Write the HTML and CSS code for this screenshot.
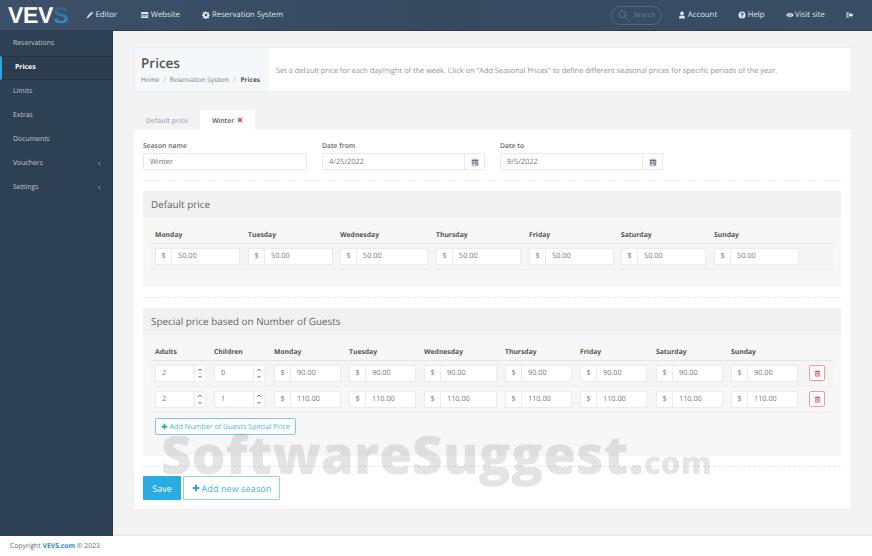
FILE: index.html
```html
<!DOCTYPE html>
<html lang="en">
<head>
<meta charset="utf-8">
<title>Prices</title>
<link rel="stylesheet" href="styles.css">
</head>
<body>
<svg class="defs" width="0" height="0" aria-hidden="true">
  <symbol id="i-pencil" viewBox="0 0 16 16"><path d="M11.5 1.5l3 3-1.6 1.6-3-3zM8.9 3.1l3 3-7.4 7.4L1 15l1.5-3.5z" fill="currentColor"/></symbol>
  <symbol id="i-table" viewBox="0 0 16 16"><path d="M1 2h14v12H1zM2.2 6v2h3.4V6zm4.6 0v2h3.4V6zm4.6 0v2h2.4V6zM2.2 9.2v2h3.4v-2zm4.6 0v2h3.4v-2zm4.6 0v2h2.4v-2z" fill="currentColor" fill-rule="evenodd"/></symbol>
  <symbol id="i-cog" viewBox="0 0 16 16"><path d="M6.8 1h2.4l.4 2 1.3.6 1.7-1.1 1.7 1.7-1.1 1.7.6 1.3 2 .4v2.4l-2 .4-.6 1.3 1.1 1.7-1.7 1.7-1.7-1.1-1.3.6-.4 2H6.8l-.4-2-1.3-.6-1.7 1.1-1.7-1.7 1.1-1.7-.6-1.3-2-.4V6.8l2-.4.6-1.3-1.1-1.7 1.7-1.7 1.7 1.1 1.3-.6zM8 5.5a2.5 2.5 0 100 5 2.5 2.5 0 000-5z" fill="currentColor" fill-rule="evenodd"/></symbol>
  <symbol id="i-user" viewBox="0 0 16 16"><path d="M8 1a3.5 3.5 0 110 7.4A3.5 3.5 0 018 1zM2 15c0-4 1.500-6 3.500-6 .8.600 1.600.900 2.500.900s1.700-.300 2.500-.900c2 0 3.500 2 3.500 6z" fill="currentColor"/></symbol>
  <symbol id="i-help" viewBox="0 0 16 16"><path d="M8 1a7 7 0 110 14A7 7 0 018 1zM7 11v2h2v-2zM8 3.500c-1.700 0-2.900.900-3.100 2.500l1.900.300c.1-.8.500-1.100 1.200-1.100.6 0 1 .300 1 .800s-.300.800-.900 1.200C7.300 7.300 7 8 7 9v.8h2V9.300c0-.4.200-.600.800-1 .8-.600 1.300-1.200 1.300-2.200 0-1.600-1.300-2.600-3.100-2.600z" fill="currentColor" fill-rule="evenodd"/></symbol>
  <symbol id="i-eye" viewBox="0 0 16 16"><path d="M8 3.500c3.200 0 5.800 1.900 7.500 4.500-1.700 2.600-4.300 4.500-7.500 4.500S2.200 10.600.5 8C2.200 5.400 4.800 3.500 8 3.500zM8 5a3 3 0 100 6 3 3 0 000-6zm0 1.200a1.800 1.800 0 110 3.600 1.800 1.800 0 010-3.600z" fill="currentColor" fill-rule="evenodd"/></symbol>
  <symbol id="i-out" viewBox="0 0 16 16"><path d="M1 3h5v2H3v6h3v2H1zM9 3.500L15 8l-6 4.500V10H5.500V6H9z" fill="currentColor"/></symbol>
  <symbol id="i-cal" viewBox="0 0 16 16"><path d="M4 1h1.500v2H4zm6.500 0H12v2h-1.500zM1.500 2.500H3V4h3.500V2.500h3V4H13V2.500h1.500V15h-13zM3 6.500v1.800h2V6.500zm3 0v1.800h2V6.500zm3 0v1.800h2V6.500zm3 0v1.800h1V6.500zM3 9.300v1.800h2V9.300zm3 0v1.800h2V9.300zm3 0v1.800h2V9.300zm3 0v1.800h1V9.300zM3 12v1.800h2V12zm3 0v1.800h2V12zm3 0v1.800h2V12z" fill="currentColor" fill-rule="evenodd"/></symbol>
  <symbol id="i-plus" viewBox="0 0 16 16"><path d="M6 1.500h4V6h4.500v4H10v4.500H6V10H1.500V6H6z" fill="currentColor"/></symbol>
  <symbol id="i-x" viewBox="0 0 16 16"><path d="M4.500 1.500L8 5l3.500-3.500 3 3L11 8l3.500 3.500-3 3L8 11l-3.500 3.500-3-3L5 8 1.500 4.500z" fill="currentColor"/></symbol>
  <symbol id="i-trash" viewBox="0 0 16 16"><path d="M6 1h4l.5 1.500H14V5H2V2.500h3.500zM3 6h10v9H3zm2.200 1.500v6h1.200v-6zm2.200 0v6h1.200v-6zm2.200 0v6h1.200v-6z" fill="currentColor" fill-rule="evenodd"/></symbol>
  <symbol id="i-search" viewBox="0 0 16 16"><circle cx="7" cy="7" r="5.500" fill="none" stroke="currentColor" stroke-width="1"/><path d="M11 11l4 4" stroke="currentColor" stroke-width="1"/></symbol>
  <symbol id="i-left" viewBox="0 0 16 16"><path d="M10.500 2.500L5 8l5.500 5.500" fill="none" stroke="currentColor" stroke-width="2.500"/></symbol>
  <symbol id="i-up" viewBox="0 0 16 16"><path d="M2.500 11L8 5.500l5.500 5.500" fill="none" stroke="currentColor" stroke-width="3"/></symbol>
  <symbol id="i-down" viewBox="0 0 16 16"><path d="M2.500 5L8 10.500 13.500 5" fill="none" stroke="currentColor" stroke-width="3"/></symbol>
</svg>

<header class="topbar">
  <div class="logo">VEV<span class="logo-s">S</span></div>
  <nav class="top-left">
    <a class="top-link"><svg class="ico"><use href="#i-pencil"/></svg>Editor</a>
    <a class="top-link"><svg class="ico ico-wide"><use href="#i-table"/></svg>Website</a>
    <a class="top-link"><svg class="ico"><use href="#i-cog"/></svg>Reservation System</a>
  </nav>
  <nav class="top-right">
    <div class="search"><svg class="search-ico"><use href="#i-search"/></svg><span>Search</span></div>
    <a class="top-link"><svg class="ico"><use href="#i-user"/></svg>Account</a>
    <a class="top-link"><svg class="ico"><use href="#i-help"/></svg>Help</a>
    <a class="top-link"><svg class="ico"><use href="#i-eye"/></svg>Visit site</a>
    <a class="top-link"><svg class="ico"><use href="#i-out"/></svg></a>
  </nav>
</header>

<div class="middle">
  <aside class="sidebar">
    <a class="side-item">Reservations</a>
    <a class="side-item active">Prices</a>
    <a class="side-item">Limits</a>
    <a class="side-item">Extras</a>
    <a class="side-item">Documents</a>
    <a class="side-item">Vouchers<svg class="chev"><use href="#i-left"/></svg></a>
    <a class="side-item">Settings<svg class="chev"><use href="#i-left"/></svg></a>
  </aside>

  <main class="main">
    <section class="page-head">
      <div class="title-box">
        <h1>Prices</h1>
        <div class="crumbs"><span>Home</span><i>/</i><span>Reservation System</span><i>/</i><b>Prices</b></div>
      </div>
      <p class="page-desc">Set a default price for each day/night of the week. Click on "Add Seasonal Prices" to define different seasonal prices for specific periods of the year.</p>
    </section>

    <div class="tabs">
      <a class="tab">Default price</a>
      <a class="tab current">Winter <svg class="tab-x"><use href="#i-x"/></svg></a>
    </div>

    <section class="card">
      <div class="form-row">
        <div class="field f-season">
          <label>Season name</label>
          <div class="box"><span class="val">Winter</span></div>
        </div>
        <div class="field f-date">
          <label>Date from</label>
          <div class="box"><span class="val">4/25/2022</span><span class="cal"><svg class="cal-ico"><use href="#i-cal"/></svg></span></div>
        </div>
        <div class="field f-date">
          <label>Date to</label>
          <div class="box"><span class="val">9/5/2022</span><span class="cal"><svg class="cal-ico"><use href="#i-cal"/></svg></span></div>
        </div>
      </div>

      <hr class="dash dash-first">

      <section class="panel panel-default">
        <h2>Default price</h2>
        <div class="panel-body">
          <div class="grid week th-row">
            <span>Monday</span><span>Tuesday</span><span>Wednesday</span><span>Thursday</span><span>Friday</span><span>Saturday</span><span>Sunday</span>
          </div>
          <div class="grid week tr shaded">
            <div class="money"><span class="cur">$</span><span class="amt">50.00</span></div>
            <div class="money"><span class="cur">$</span><span class="amt">50.00</span></div>
            <div class="money"><span class="cur">$</span><span class="amt">50.00</span></div>
            <div class="money"><span class="cur">$</span><span class="amt">50.00</span></div>
            <div class="money"><span class="cur">$</span><span class="amt">50.00</span></div>
            <div class="money"><span class="cur">$</span><span class="amt">50.00</span></div>
            <div class="money"><span class="cur">$</span><span class="amt">50.00</span></div>
          </div>
        </div>
      </section>

      <hr class="dash">

      <section class="panel panel-special">
        <h2>Special price based on Number of Guests</h2>
        <div class="panel-body">
          <div class="grid guests th-row">
            <span>Adults</span><span>Children</span><span>Monday</span><span>Tuesday</span><span>Wednesday</span><span>Thursday</span><span>Friday</span><span>Saturday</span><span>Sunday</span>
          </div>
          <div class="grid guests tr shaded">
            <div class="spin"><span class="num">2</span><span class="arrows"><svg><use href="#i-up"/></svg><svg><use href="#i-down"/></svg></span></div>
            <div class="spin"><span class="num">0</span><span class="arrows"><svg><use href="#i-up"/></svg><svg><use href="#i-down"/></svg></span></div>
            <div class="money"><span class="cur">$</span><span class="amt">90.00</span></div>
            <div class="money"><span class="cur">$</span><span class="amt">90.00</span></div>
            <div class="money"><span class="cur">$</span><span class="amt">90.00</span></div>
            <div class="money"><span class="cur">$</span><span class="amt">90.00</span></div>
            <div class="money"><span class="cur">$</span><span class="amt">90.00</span></div>
            <div class="money"><span class="cur">$</span><span class="amt">90.00</span></div>
            <div class="money"><span class="cur">$</span><span class="amt">90.00</span></div>
            <a class="del"><svg><use href="#i-trash"/></svg></a>
          </div>
          <div class="grid guests tr">
            <div class="spin"><span class="num">2</span><span class="arrows"><svg><use href="#i-up"/></svg><svg><use href="#i-down"/></svg></span></div>
            <div class="spin"><span class="num">1</span><span class="arrows"><svg><use href="#i-up"/></svg><svg><use href="#i-down"/></svg></span></div>
            <div class="money"><span class="cur">$</span><span class="amt">110.00</span></div>
            <div class="money"><span class="cur">$</span><span class="amt">110.00</span></div>
            <div class="money"><span class="cur">$</span><span class="amt">110.00</span></div>
            <div class="money"><span class="cur">$</span><span class="amt">110.00</span></div>
            <div class="money"><span class="cur">$</span><span class="amt">110.00</span></div>
            <div class="money"><span class="cur">$</span><span class="amt">110.00</span></div>
            <div class="money"><span class="cur">$</span><span class="amt">110.00</span></div>
            <a class="del"><svg><use href="#i-trash"/></svg></a>
          </div>
          <a class="add-guests"><svg><use href="#i-plus"/></svg>Add Number of Guests Special Price</a>
        </div>
      </section>

      <hr class="dash">

      <div class="actions">
        <a class="btn-save">Save</a>
        <a class="btn-add"><svg><use href="#i-plus"/></svg>Add new season</a>
      </div>
    </section>
  </main>
</div>

<footer class="footer">Copyright <b>VEVS.com</b> © 2023</footer>

<div class="watermark">SoftwareSuggest.<small>com</small></div>
</body>
</html>
```

FILE: styles.css
```css
* { box-sizing: border-box; }
html, body { margin: 0; padding: 0; }
body {
  width: 872px;
  height: 556px;
  overflow: hidden;
  position: relative;
  display: flex;
  flex-direction: column;
  background: #fff;
  font-family: "Open Sans", "Liberation Sans", sans-serif;
  font-size: 8px;
  color: #666;
  text-rendering: geometricPrecision;
}
.defs { position: absolute; }
a { color: inherit; text-decoration: none; }

/* top bar */
.topbar {
  flex: 0 0 31px;
  display: flex;
  align-items: center;
  background: linear-gradient(90deg, #3c5169, #36495f 50%, #394e66);
  border-bottom: 1px solid #2d3d4f;
  color: #dfe5ea;
}
.logo {
  width: 86px;
  padding-left: 8px;
  font-family: "Liberation Sans", sans-serif;
  font-weight: 700;
  font-size: 23px;
  letter-spacing: -0.300px;
  color: #fff;
}
.logo-s {
  background: linear-gradient(180deg, #3a5f85 20%, #2f8ccb 75%);
  -webkit-background-clip: text;
  background-clip: text;
  color: transparent;
}
.top-left { display: flex; gap: 22.500px; }
.top-right { display: flex; align-items: center; gap: 21px; margin-left: auto; padding-right: 18px; }
.top-link { display: flex; align-items: center; gap: 1.500px; font-size: 7.800px; line-height: 12px; white-space: nowrap; }
.ico { width: 8px; height: 8px; }
.ico-wide { width: 9.500px; }
.search {
  width: 51px;
  height: 19px;
  margin-right: -5px;
  display: flex;
  align-items: center;
  gap: 5px;
  padding-left: 6px;
  border: 1px solid #56677b;
  border-radius: 10px;
  font-size: 7px;
  color: #6e8093;
}
.search-ico { width: 10px; height: 10px; color: #77879a; }

/* middle */
.middle { flex: 0 0 505px; display: flex; }
.sidebar {
  flex: 0 0 113px;
  display: flex;
  flex-direction: column;
  padding-top: 1px;
  background: #2e4054;
  border-right: 1px solid #27374a;
  color: #c0c8d0;
}
.side-item {
  height: 23.900px;
  display: flex;
  align-items: center;
  justify-content: space-between;
  padding: 0 10px 0 13px;
  font-size: 6.900px;
}
.side-item.active {
  padding-left: 13px;
  background: #2b3c4f;
  border-left: 2px solid #29a9e1;
  border-top: 1px solid #243343;
  border-bottom: 1px solid #243343;
  font-weight: 700;
  color: #fff;
}
.chev { width: 5px; height: 5px; color: #a9b3bd; }

.main {
  flex: 1;
  padding: 16px 21px 0;
  background: #f3f3f3;
  border-bottom: 1px solid #e6e6e6;
}

.page-head {
  width: 718px;
  height: 45px;
  display: flex;
  align-items: center;
  background: #fff;
  border: 1px solid #eeeeee;
}
.title-box {
  flex: 0 0 134px;
  width: 134px;
  height: 100%;
  padding: 6px 6px;
  background: #f5f7fa;
  white-space: nowrap;
  overflow: hidden;
}
.title-box h1 { margin: 0; font-size: 13.500px; line-height: 18px; font-weight: 600; color: #555; }
.crumbs { display: flex; gap: 3px; margin-top: 3px; font-size: 6.500px; line-height: 9px; color: #777; }
.crumbs i { font-style: normal; color: #aaa; margin: 0 1px; }
.crumbs b { color: #555; margin-left: 1px; }
.page-desc { margin: 2px 0 0 7px; font-size: 7.370px; color: #949494; white-space: nowrap; }

.tabs { display: flex; height: 20px; margin-top: 18px; }
.tab { width: 66px; display: flex; align-items: center; justify-content: center; font-size: 6.800px; font-weight: 600; color: #a7afbb; }
.tab.current { width: 55px; gap: 3px; background: #fff; color: #555; }
.tab-x { width: 6px; height: 6px; color: #e4505f; }

.card {
  width: 718px;
  height: 380px;
  padding: 11px 10px 0 9px;
  background: #fff;
  border: 1px solid #eeeeee;
  border-top: 0;
  border-left: 0;
}
.form-row { display: flex; gap: 15px; }
.field label { display: block; margin-bottom: 3px; font-size: 6.800px; line-height: 9px; font-weight: 600; color: #666; }
.f-season { width: 164px; }
.f-date { width: 163px; }
.box {
  height: 17px;
  display: flex;
  align-items: center;
  border: 1px solid #e9e9e9;
  border-radius: 1px;
  font-size: 7.400px;
  color: #777;
}
.val { flex: 1; padding-left: 6px; }
.cal { width: 20px; height: 100%; display: flex; align-items: center; justify-content: center; border-left: 1px solid #e9e9e9; }
.cal-ico { width: 8px; height: 8px; color: #66717c; }

.dash { height: 0; margin: 10px 0; border: 0; border-top: 1px dashed #e8e8e8; }

.panel { background: #f7f7f7; }
.panel h2 {
  height: 27px;
  margin: 0;
  padding-left: 8px;
  background: #f1f1f1;
  font-size: 9.900px;
  font-weight: 400;
  line-height: 27px;
  color: #666;
}
.panel-body { padding: 0 8px; }
.panel-default { height: 96px; }
.panel-special { height: 148px; }

.grid { display: grid; padding-left: 4px; align-items: center; }
.week { grid-template-columns: 93px 92px 96px 93px 92px 93px 85px; }
.guests { grid-template-columns: 59px 60px 75px 75px 81px 75px 76px 75px 78px 16px; }
.th-row { height: 26px; padding-top: 8px; font-size: 6.800px; font-weight: 700; color: #555; border-bottom: 1px solid #e6e6e6; }
.tr { height: 26px; padding-bottom: 1px; border-bottom: 1px solid #efefef; }
.shaded { background: #f5f5f5; }

.money { display: flex; width: 67px; height: 17px; background: #fff; border: 1px solid #ebebeb; font-size: 7.300px; color: #777; line-height: 15px; }
.week .money { width: 85px; }
.week .money:nth-child(3) { width: 88px; }
.guests .money:nth-child(5) { width: 73px; }
.cur { flex: 0 0 16px; text-align: center; border-right: 1px solid #ebebeb; }
.amt { padding-left: 6px; }

.spin { display: flex; width: 51px; height: 17px; }
.num { width: 40px; padding-left: 6px; background: #fff; border: 1px solid #ebebeb; font-size: 7.300px; line-height: 15px; color: #777; }
.arrows { width: 11px; display: flex; flex-direction: column; background: #fff; border: 1px solid #f0f0f0; border-left: 0; border-radius: 0 2px 2px 0; }
.arrows svg { width: 10px; height: 7.500px; padding: 1.500px 2.500px; color: #444; }

.del { width: 16px; height: 16px; display: flex; align-items: center; justify-content: center; background: #fff; border: 1px solid #f29aa3; border-radius: 2px; color: #e4505f; }
.del svg { width: 7px; height: 7px; }

.add-guests {
  width: 141px;
  height: 17px;
  margin: 5px 0 0 4px;
  display: flex;
  align-items: center;
  justify-content: center;
  gap: 1.500px;
  background: #fff;
  border: 1px solid #7ccbee;
  border-radius: 2px;
  font-size: 7.200px;
  color: #4fb5e4;
  white-space: nowrap;
}
.add-guests svg { width: 7px; height: 7px; color: #29a1dc; }

.actions { display: flex; gap: 2px; margin-top: -1px; }
.btn-save {
  width: 38px;
  height: 24px;
  display: flex;
  align-items: center;
  justify-content: center;
  background: #29ace3;
  border-radius: 1px;
  font-size: 9px;
  color: #fff;
}
.btn-add {
  width: 97px;
  height: 24px;
  display: flex;
  align-items: center;
  justify-content: center;
  gap: 2px;
  background: #fff;
  border: 1px solid #8ed3f1;
  border-radius: 1px;
  font-size: 9px;
  letter-spacing: 0.100px;
  color: #3fb0e4;
}
.btn-add svg { width: 8px; height: 8px; color: #29a1dc; }

.footer { flex: 1; padding: 5px 0 0 10px; font-size: 6.800px; line-height: 10px; color: #666; }
.footer b { color: #2a8fc4; }

.watermark {
  position: absolute;
  left: 161px;
  top: 419px;
  font-family: "Open Sans", sans-serif;
  font-weight: 800;
  font-size: 53px;
  line-height: 70px;
  letter-spacing: 0.200px;
  color: rgba(120, 120, 120, 0.2);
  white-space: nowrap;
  pointer-events: none;
}
.watermark small { font-size: 31px; font-weight: 800; }
```
